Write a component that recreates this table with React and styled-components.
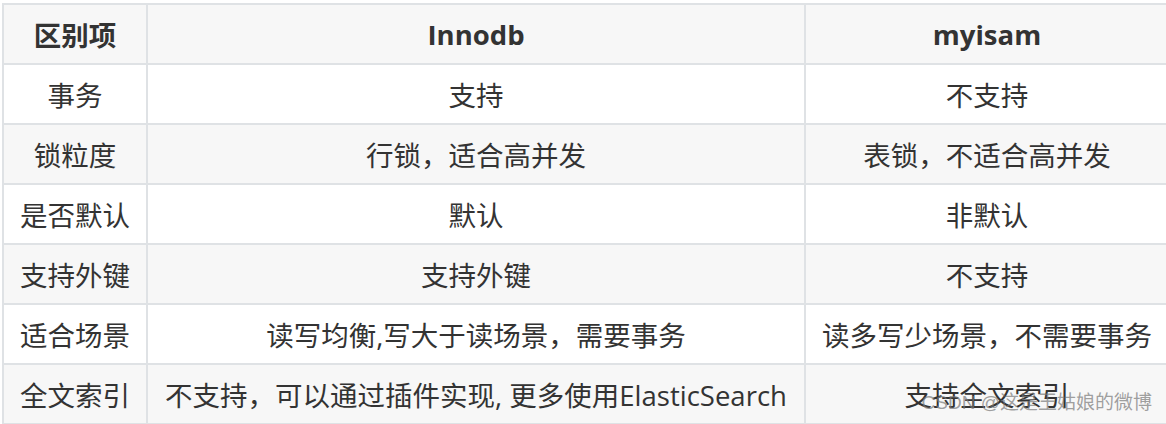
import React from "react";
import styled, { createGlobalStyle } from "styled-components";

const GlobalStyle = createGlobalStyle`
  html, body {
    margin: 0;
    padding: 0;
    background: #fff;
    overflow: hidden;
  }
`;

const Page = styled.div`
  position: relative;
  width: 1166px;
  height: 424px;
  overflow: hidden;
  padding: 3px 0 0 2px;
  box-sizing: border-box;
  font-family: "Open Sans", "Noto Sans CJK SC", sans-serif;
  color: #333;
`;

const Table = styled.table`
  width: 1168px;
  border-collapse: collapse;
  table-layout: fixed;
  font-size: 27.5px;
`;

const Row = styled.tr`
  height: 60px;
  background: ${(p) => (p.$shaded ? "#f7f7f7" : "#fff")};
`;

const HeadCell = styled.th`
  border: 2px solid #dfe2e5;
  font-weight: 700;
  text-align: center;
  padding: 0 12px;
  background: #f7f7f7;
`;

const Cell = styled.td`
  border: 2px solid #dfe2e5;
  text-align: center;
  padding: 0 10px;
  white-space: nowrap;
`;

const Watermark = styled.div`
  position: absolute;
  right: 14px;
  bottom: 10px;
  font-size: 19px;
  color: rgba(120, 120, 120, 0.7);
  font-family: "Liberation Sans", "Noto Sans CJK SC", sans-serif;
`;

const rows = [
  ["事务", "支持", "不支持"],
  ["锁粒度", "行锁，适合高并发", "表锁，不适合高并发"],
  ["是否默认", "默认", "非默认"],
  ["支持外键", "支持外键", "不支持"],
  ["适合场景", "读写均衡,写大于读场景，需要事务", "读多写少场景，不需要事务"],
  ["全文索引", "不支持，可以通过插件实现, 更多使用ElasticSearch", "支持全文索引"],
];

export default function App() {
  return (
    <>
      <GlobalStyle />
      <Page>
        <Table>
          <colgroup>
            <col style={{ width: 144 }} />
            <col style={{ width: 658 }} />
            <col />
          </colgroup>
          <thead>
            <Row $shaded>
              <HeadCell>区别项</HeadCell>
              <HeadCell>Innodb</HeadCell>
              <HeadCell>myisam</HeadCell>
            </Row>
          </thead>
          <tbody>
            {rows.map((r, i) => (
              <Row key={r[0]} $shaded={i % 2 === 1}>
                {r.map((c, j) => (
                  <Cell key={j}>{c}</Cell>
                ))}
              </Row>
            ))}
          </tbody>
        </Table>
        <Watermark>CSDN @这是王姑娘的微博</Watermark>
      </Page>
    </>
  );
}
